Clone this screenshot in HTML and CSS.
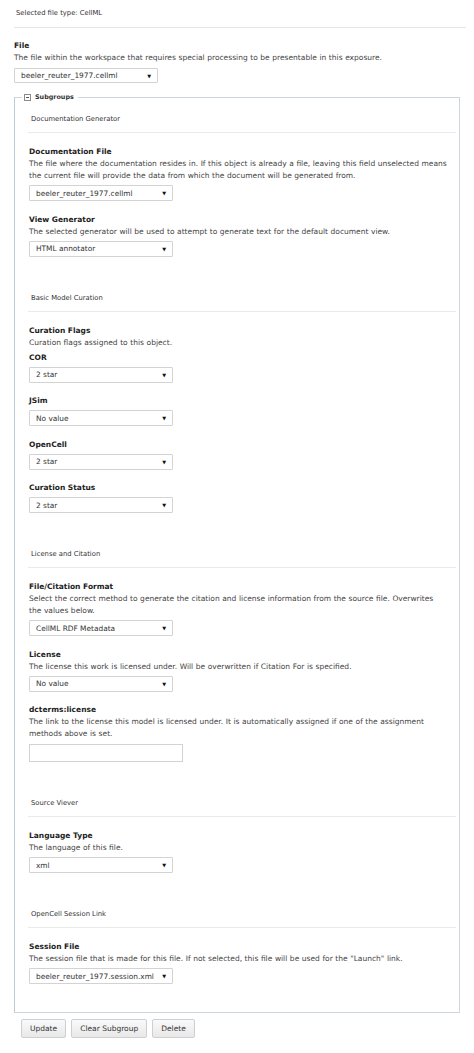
FILE: index.html
```html
<!DOCTYPE html>
<html lang="en">
<head>
<meta charset="utf-8">
<title>Edit exposure file</title>
<link rel="stylesheet" href="styles.css">
</head>
<body>
<div class="page">
  <div class="filetype">Selected file type: CellML</div>
  <div class="rule"></div>

  <div class="field top-field">
    <div class="label">File</div>
    <div class="desc">The file within the workspace that requires special processing to be presentable in this exposure.</div>
    <div class="select"><span>beeler_reuter_1977.cellml</span><span class="arrow">▼</span></div>
  </div>

  <fieldset class="subgroups">
    <legend><span class="toggle"></span>Subgroups</legend>

    <div class="section first">Documentation Generator</div>
    <div class="field">
      <div class="label">Documentation File</div>
      <div class="desc">The file where the documentation resides in. If this object is already a file, leaving this field unselected means the current file will provide the data from which the document will be generated from.</div>
      <div class="select"><span>beeler_reuter_1977.cellml</span><span class="arrow">▼</span></div>
    </div>
    <div class="field">
      <div class="label">View Generator</div>
      <div class="desc">The selected generator will be used to attempt to generate text for the default document view.</div>
      <div class="select"><span>HTML annotator</span><span class="arrow">▼</span></div>
    </div>

    <div class="section">Basic Model Curation</div>
    <div class="field">
      <div class="label">Curation Flags</div>
      <div class="desc">Curation flags assigned to this object.</div>
      <div class="label sub">COR</div>
      <div class="select"><span>2 star</span><span class="arrow">▼</span></div>
    </div>
    <div class="field">
      <div class="label">JSim</div>
      <div class="select"><span>No value</span><span class="arrow">▼</span></div>
    </div>
    <div class="field">
      <div class="label">OpenCell</div>
      <div class="select"><span>2 star</span><span class="arrow">▼</span></div>
    </div>
    <div class="field">
      <div class="label">Curation Status</div>
      <div class="select"><span>2 star</span><span class="arrow">▼</span></div>
    </div>

    <div class="section">License and Citation</div>
    <div class="field">
      <div class="label">File/Citation Format</div>
      <div class="desc narrow">Select the correct method to generate the citation and license information from the source file. Overwrites the values below.</div>
      <div class="select"><span>CellML RDF Metadata</span><span class="arrow">▼</span></div>
    </div>
    <div class="field">
      <div class="label">License</div>
      <div class="desc">The license this work is licensed under. Will be overwritten if Citation For is specified.</div>
      <div class="select"><span>No value</span><span class="arrow">▼</span></div>
    </div>
    <div class="field">
      <div class="label">dcterms:license</div>
      <div class="desc">The link to the license this model is licensed under. It is automatically assigned if one of the assignment methods above is set.</div>
      <div class="textbox"></div>
    </div>

    <div class="section">Source Viever</div>
    <div class="field">
      <div class="label">Language Type</div>
      <div class="desc">The language of this file.</div>
      <div class="select"><span>xml</span><span class="arrow">▼</span></div>
    </div>

    <div class="section">OpenCell Session Link</div>
    <div class="field">
      <div class="label">Session File</div>
      <div class="desc">The session file that is made for this file. If not selected, this file will be used for the "Launch" link.</div>
      <div class="select"><span>beeler_reuter_1977.session.xml</span><span class="arrow">▼</span></div>
    </div>
  </fieldset>

  <div class="buttons">
    <button class="btn">Update</button>
    <button class="btn">Clear Subgroup</button>
    <button class="btn">Delete</button>
  </div>
</div>
</body>
</html>
```

FILE: styles.css
```css
html, body {
  margin: 0;
  padding: 0;
  background: #ffffff;
}

body {
  font-family: "DejaVu Sans", Verdana, sans-serif;
  color: #333333;
  font-size: 7.5px;
}

.page {
  padding: 8px 8px 0 14px;
}

.filetype {
  font-size: 6.8px;
  line-height: 10px;
  padding-left: 2px;
  color: #333;
}

.rule {
  height: 1px;
  background: #e6e8e8;
  margin-top: 9px;
}

.field {
  display: flex;
  flex-direction: column;
  align-items: flex-start;
  margin-top: 12.5px;
}

.top-field {
  margin-top: 12px;
}

.label {
  font-weight: bold;
  font-size: 7.5px;
  line-height: 12px;
  color: #222;
}

.label.sub {
  margin-top: 3px;
}

.desc {
  font-size: 7.5px;
  line-height: 12px;
  word-spacing: 0.2px;
  color: #444;
}

.desc.narrow {
  max-width: 417px;
}

.select {
  box-sizing: border-box;
  width: 144px;
  height: 16px;
  margin-top: 3px;
  border: 1px solid #d3d3d3;
  border-radius: 1px;
  background: #fff;
  display: flex;
  align-items: center;
  justify-content: space-between;
  padding: 0 6px 0 6px;
  font-size: 7.4px;
  color: #333;
}

.top-field .select {
  margin-top: 4px;
  height: 15px;
}

.arrow {
  font-size: 5px;
  color: #111;
}

.textbox {
  box-sizing: border-box;
  width: 154px;
  height: 18px;
  margin-top: 4px;
  border: 1px solid #d3d3d3;
  background: #fff;
}

.subgroups {
  margin: 9px 0 0 0;
  width: 446px;
  box-sizing: border-box;
  border: 1px solid #cdd6dc;
  border-left-color: #bccbd6;
  padding: 0 3px 28px 14px;
  min-width: 0;
}

.subgroups legend {
  font-weight: bold;
  font-size: 6.4px;
  line-height: 10px;
  color: #333;
  padding: 0 4px 0 2px;
  margin-left: -7px;
  display: flex;
  align-items: center;
  gap: 4px;
}

.toggle {
  position: relative;
  width: 5px;
  height: 5px;
  border: 1px solid #8a8a8a;
  background: #fff;
}

.toggle::after {
  content: "";
  position: absolute;
  left: 1px;
  right: 1px;
  top: 2px;
  height: 1px;
  background: #555;
}

.section {
  margin-top: 36px;
  font-size: 6.8px;
  line-height: 10px;
  padding: 0 0 8px 3px;
  border-bottom: 1px solid #e8eaea;
  margin-left: -1px;
  color: #333;
}

.section.first {
  margin-top: 12px;
}

.section + .field {
  margin-top: 13px;
}

.buttons {
  display: flex;
  gap: 5px;
  margin: 6px 0 0 7px;
}

.btn {
  font-family: "DejaVu Sans", Verdana, sans-serif;
  font-size: 7.5px;
  color: #333;
  height: 19px;
  padding: 0 8px;
  border: 1px solid #cfcfcf;
  border-radius: 2px;
  background: linear-gradient(#fafafa, #e8e8e8);
}
```
